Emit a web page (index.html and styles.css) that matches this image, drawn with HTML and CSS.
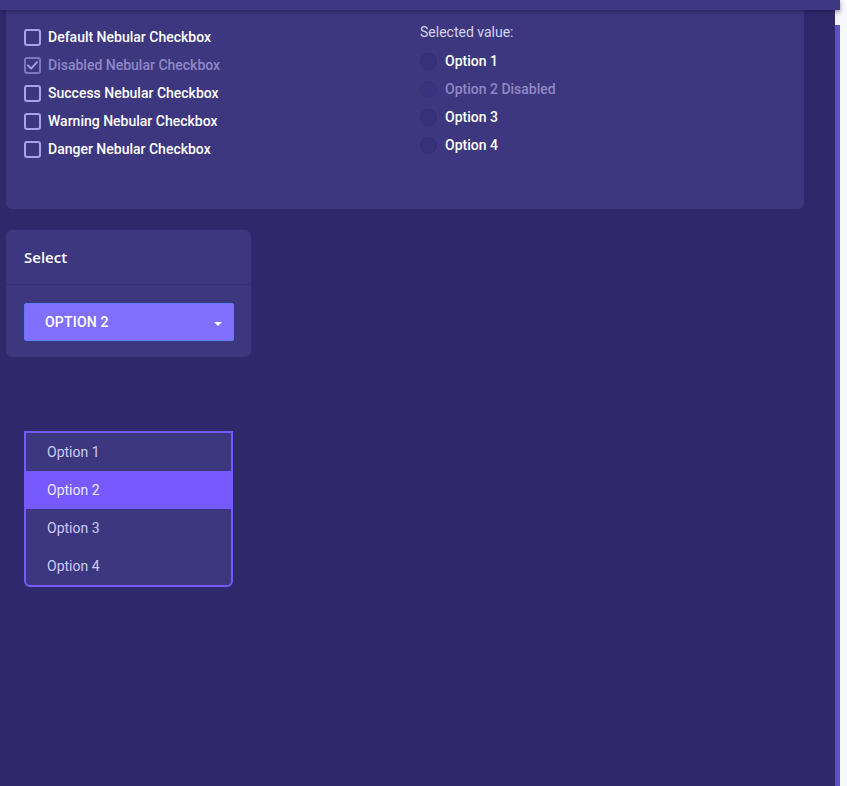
FILE: index.html
```html
<!DOCTYPE html>
<html>
<head>
<meta charset="utf-8">
<link rel="stylesheet" href="styles.css">
</head>
<body>
<div class="frame">
  <div class="app">
    <header class="header"></header>
    <div class="below">
      <main class="content">
        <section class="card card-top">
          <div class="col">
            <label class="check"><span class="box"></span><span>Default Nebular Checkbox</span></label>
            <label class="check disabled"><span class="box checked"><svg viewBox="0 0 17 17" width="17" height="17"><path d="M4 8.5 L7.2 11.6 L13 5.2" fill="none" stroke="#a9a2e6" stroke-width="1.8" stroke-linecap="round" stroke-linejoin="round"/></svg></span><span>Disabled Nebular Checkbox</span></label>
            <label class="check"><span class="box"></span><span>Success Nebular Checkbox</span></label>
            <label class="check"><span class="box"></span><span>Warning Nebular Checkbox</span></label>
            <label class="check"><span class="box"></span><span>Danger Nebular Checkbox</span></label>
          </div>
          <div class="col col-radio">
            <div class="selected">Selected value:</div>
            <label class="radio"><span class="dot"></span><span>Option 1</span></label>
            <label class="radio disabled"><span class="dot"></span><span>Option 2 Disabled</span></label>
            <label class="radio"><span class="dot"></span><span>Option 3</span></label>
            <label class="radio"><span class="dot"></span><span>Option 4</span></label>
          </div>
        </section>
        <section class="card card-select">
          <div class="card-header">Select</div>
          <div class="card-body">
            <button class="select-btn"><span>OPTION 2</span><span class="caret"></span></button>
          </div>
        </section>
        <ul class="dropdown">
          <li>Option 1</li>
          <li class="active">Option 2</li>
          <li>Option 3</li>
          <li>Option 4</li>
        </ul>
      </main>
      <div class="scrollbar"><div class="thumb"></div></div>
    </div>
  </div>
  <div class="edge"></div>
</div>
</body>
</html>
```
FILE: styles.css
```css
html, body {
  margin: 0;
  padding: 0;
  height: 100%;
}
body {
  background: #f7f7fc;
  font-family: Roboto, "Liberation Sans", sans-serif;
  overflow: hidden;
}
.frame {
  display: flex;
  height: 786px;
}
.app {
  width: 840px;
  display: flex;
  flex-direction: column;
  background: #2f296b;
}
.edge {
  flex: 1;
  background: #f7f7fc;
}
.header {
  height: 10px;
  background: #3e3883;
  box-shadow: 0 2px 4px rgba(20, 15, 60, 0.45);
  position: relative;
  z-index: 2;
}
.below {
  flex: 1;
  display: flex;
}
.content {
  width: 835px;
  padding: 0 0 0 6px;
  box-sizing: border-box;
  position: relative;
}
.scrollbar {
  width: 5px;
  background: #f3f2fa;
  display: flex;
  flex-direction: column;
}
.thumb {
  margin-top: 15px;
  flex: 1;
  background: #5c51c2;
}
.card {
  background: #3d3780;
  border-radius: 6px;
}
.card-top {
  width: 798px;
  height: 199px;
  border-radius: 0 0 6px 6px;
  box-sizing: border-box;
  padding: 13px 18px 0 18px;
  display: grid;
  grid-template-columns: 396px 1fr;
}
.col {
  display: flex;
  flex-direction: column;
}
.col-radio {
  padding-top: 1px;
}
.check, .radio {
  height: 28px;
  display: flex;
  align-items: center;
  font-size: 14px;
  font-weight: 500;
  color: #ffffff;
}
.check .box {
  width: 17px;
  height: 17px;
  box-sizing: border-box;
  border: 2px solid #a9a2e6;
  border-radius: 3px;
  margin-right: 7px;
  position: relative;
}
.check .box svg {
  position: absolute;
  left: -2px;
  top: -2px;
}
.check.disabled {
  color: #8e88c6;
}
.check.disabled .box {
  border-color: #7d76c4;
}
.selected {
  height: 23px;
  line-height: 16px;
  font-size: 14px;
  color: #d6d3ee;
}
.radio .dot {
  width: 17px;
  height: 17px;
  box-sizing: border-box;
  border-radius: 50%;
  background: #37317a;
  border: 1px solid #332d72;
  margin-right: 8px;
}
.radio.disabled {
  color: #8e88c6;
}
.radio.disabled .dot {
  background: #3a3480;
  border-color: #383279;
}
.card-select {
  width: 245px;
  margin-top: 21px;
}
.card-header {
  height: 55px;
  box-sizing: border-box;
  padding: 0 18px;
  display: flex;
  align-items: center;
  font-family: "Open Sans", Roboto, sans-serif;
  font-size: 15px;
  font-weight: 600;
  color: #ffffff;
  border-bottom: 1px solid #342e73;
}
.card-body {
  padding: 18px 17px 16px 18px;
}
.select-btn {
  width: 210px;
  height: 38px;
  display: flex;
  align-items: center;
  justify-content: space-between;
  padding: 0 11px 0 20px;
  box-sizing: border-box;
  background: #8170ff;
  border: 1px solid #5f7cf5;
  border-radius: 2px;
  color: #ffffff;
  font-family: Roboto, sans-serif;
  font-size: 14px;
  font-weight: 500;
  letter-spacing: 0.2px;
}
.caret {
  width: 0;
  height: 0;
  border-left: 4px solid transparent;
  border-right: 4px solid transparent;
  border-top: 4px solid #ffffff;
  margin-top: 3px;
}
.dropdown {
  list-style: none;
  margin: 74px 0 0 18px;
  padding: 0;
  width: 209px;
  box-sizing: border-box;
  border: 2px solid #7659ff;
  border-radius: 0 0 6px 6px;
  background: #3d3780;
  overflow: hidden;
}
.dropdown li {
  height: 38px;
  display: flex;
  align-items: center;
  padding-left: 21px;
  font-size: 14px;
  color: #cfcaf5;
}
.dropdown li.active {
  background: #7659ff;
  color: #ece9ff;
}
```
